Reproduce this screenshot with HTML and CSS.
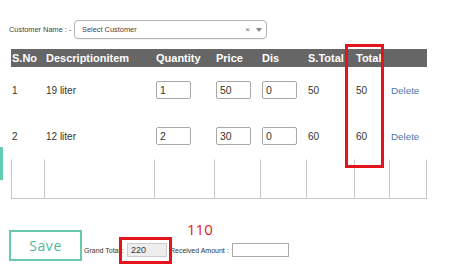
FILE: index.html
```html
<!DOCTYPE html>
<html>
<head>
<meta charset="utf-8">
<link rel="stylesheet" href="styles.css">
</head>
<body>
<div class="page">
  <div class="customer">
    <label class="cust-label">Customer Name : -</label>
    <div class="select">
      <span class="select-text">Select Customer</span>
      <span class="clear">×</span>
      <span class="caret"></span>
    </div>
  </div>

  <table class="items">
    <colgroup>
      <col class="c-sno"><col class="c-desc"><col class="c-qty"><col class="c-price">
      <col class="c-dis"><col class="c-stotal"><col class="c-total"><col class="c-del">
    </colgroup>
    <thead>
      <tr><th>S.No</th><th>Descriptionitem</th><th>Quantity</th><th>Price</th><th>Dis</th><th>S.Total</th><th>Total</th><th></th></tr>
    </thead>
    <tbody>
      <tr class="row">
        <td>1</td><td>19 liter</td>
        <td><input class="num" value="1"></td>
        <td><input class="num" value="50"></td>
        <td><input class="num" value="0"></td>
        <td>50</td><td>50</td><td><a class="delete">Delete</a></td>
      </tr>
      <tr class="row">
        <td>2</td><td>12 liter</td>
        <td><input class="num" value="2"></td>
        <td><input class="num" value="30"></td>
        <td><input class="num" value="0"></td>
        <td>60</td><td>60</td><td><a class="delete">Delete</a></td>
      </tr>
      <tr class="empty">
        <td></td><td></td><td></td><td></td><td></td><td></td><td></td><td></td>
      </tr>
    </tbody>
  </table>

  <div class="footer">
    <button class="save">Save</button>
    <div class="totals">
      <div class="grand-amount">110</div>
      <div class="totals-row">
        <span class="t-label">Grand Total :</span>
        <input class="grand-input" value="220">
        <span class="t-label">Received Amount :</span>
        <input class="received-input" value="">
      </div>
    </div>
  </div>

  <div class="highlight hl-total"></div>
  <div class="highlight hl-grand"></div>
  <div class="side-tab"></div>
</div>
</body>
</html>
```

FILE: styles.css
```css
* { box-sizing: border-box; }
html, body { margin: 0; padding: 0; background: #fff; }
body { font-family: "Liberation Sans", Arial, sans-serif; color: #333; }

.page { position: relative; width: 474px; height: 276px; overflow: hidden; }

.customer {
  display: flex;
  align-items: center;
  padding: 20px 0 0 9px;
}
.cust-label { width: 65px; font-size: 7.4px; color: #444; white-space: nowrap; }
.select {
  width: 193px;
  height: 19px;
  border: 1px solid #b4b4b4;
  border-radius: 4px;
  display: flex;
  align-items: center;
  padding: 0 4px 0 7px;
  box-shadow: 0 1px 1px rgba(0,0,0,0.05);
}
.select-text { flex: 1; font-size: 7.4px; color: #444; }
.clear { font-size: 8px; color: #666; margin-right: 6px; }
.caret {
  width: 0; height: 0;
  border-left: 3px solid transparent;
  border-right: 3px solid transparent;
  border-top: 4px solid #888;
}

.items {
  margin: 10px 0 0 11px;
  width: 416px;
  table-layout: fixed;
  border-collapse: separate;
  border-spacing: 0;
}
.c-sno { width: 34px; }
.c-desc { width: 110px; }
.c-qty { width: 60px; }
.c-price { width: 46px; }
.c-dis { width: 46px; }
.c-stotal { width: 48px; }
.c-total { width: 35px; }
.c-del { width: 37px; }

.items th {
  background: #666;
  color: #fff;
  font-weight: bold;
  font-size: 11px;
  height: 18px;
  line-height: 18px;
  padding: 0 0 0 1px;
  text-align: left;
  white-space: nowrap;
  overflow: hidden;
}
.row td {
  height: 46px;
  padding: 0 0 0 1px;
  font-size: 10px;
  color: #333;
  vertical-align: middle;
  white-space: nowrap;
}
.num {
  width: 35px;
  height: 18px;
  border: 1px solid #a9a9a9;
  border-radius: 2px;
  padding: 0 3px;
  font-family: "Liberation Sans", Arial, sans-serif;
  font-size: 10.5px;
  color: #333;
  background: #fff;
}
.delete { color: #4a79b4; font-size: 9.8px; }

.empty td {
  height: 40px;
  border-right: 1px solid #c8c8c8;
  border-bottom: 1px solid #c8c8c8;
  border-top: 1px solid #fff;
}
.empty td:first-child { border-left: 1px solid #c8c8c8; }

.footer {
  display: flex;
  align-items: flex-end;
  margin-top: 22px;
  padding-left: 9px;
}
.save {
  width: 73px;
  height: 31px;
  border: 2px solid #66c9b0;
  background: #fff;
  color: #4db89d;
  font-family: "Open Sans", sans-serif;
  font-size: 14px;
  letter-spacing: 0.6px;
  padding: 0;
  text-align: center;
}
.totals {
  display: flex;
  flex-direction: column;
  margin: 0 0 4px 2px;
}
.grand-amount {
  font-family: "Open Sans", sans-serif;
  font-size: 15px;
  line-height: 17px;
  color: #e02020;
  padding-left: 103px;
}
.totals-row {
  display: flex;
  align-items: center;
  gap: 3px;
  margin-top: 5px;
  height: 14px;
}
.t-label { font-size: 7px; color: #333; white-space: nowrap; }
.grand-input {
  width: 40px;
  height: 14px;
  background: #eee;
  border: 1px solid #ccc;
  padding: 0 3px;
  font-family: "Liberation Sans", Arial, sans-serif;
  font-size: 9px;
  color: #333;
}
.received-input {
  width: 57px;
  height: 14px;
  background: #fff;
  border: 1px solid #aaa;
  padding: 0 3px;
  font-size: 9px;
}

.highlight {
  position: absolute;
  border: 3px solid #e3141c;
}
.hl-total { left: 345px; top: 44px; width: 39px; height: 124px; }
.hl-grand { left: 119px; top: 237px; width: 53px; height: 27px; }

.side-tab {
  position: absolute;
  left: 0; top: 147px;
  width: 3px; height: 33px;
  background: #62cdb3;
}
```
